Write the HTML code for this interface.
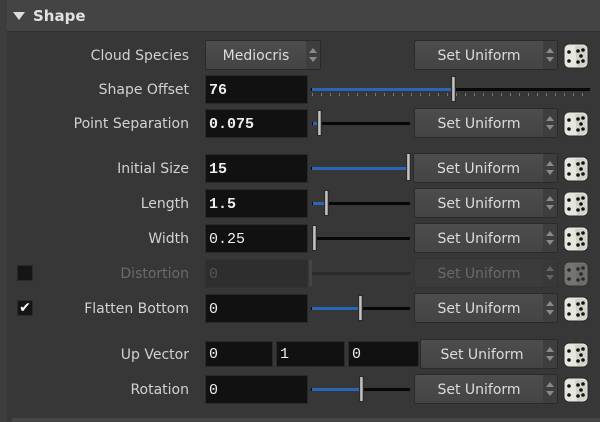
<!DOCTYPE html>
<html><head><meta charset="utf-8"><style>
*{margin:0;padding:0;box-sizing:border-box}
body{width:600px;height:422px;overflow:hidden;background:#373737;position:relative;font-family:"DejaVu Sans","Liberation Sans",sans-serif;color:#d6d6d6}
.a{position:absolute}
.strip{left:0;top:0;width:7px;height:422px;background:#3d3d3d}
.hdr{left:7px;top:0;width:593px;height:32px;background:#444;border-bottom:1px solid #303030}
.hdr .t{left:8px;top:7px;font-weight:bold;font-size:15px;color:#e2e2e2}
.lbl{right:411px;font-size:14px;color:#d2d2d2;text-align:right;white-space:nowrap;margin-top:2px}
.fld{background:#111;border:1px solid #2a2a2a;height:29px;font-family:"Liberation Mono","DejaVu Sans Mono",monospace;font-size:15px;color:#eee;padding:6px 0 0 3px}
.b{font-weight:bold}
.btn{height:30px;border:1px solid #2a2a2a;border-radius:2px;background:linear-gradient(#4d4d4d,#444);font-size:14px;color:#dcdcdc}
.btn .tx{left:0;right:14px;top:7px;text-align:center}
.btn .ar{right:0;top:0;bottom:0;width:14px;background:#3e3e3e}
.ar:before{content:"";position:absolute;left:3px;top:7px;border:4px solid transparent;border-bottom:5px solid #8a8a8a;border-top:0}
.ar:after{content:"";position:absolute;left:3px;top:16px;border:4px solid transparent;border-top:5px solid #8a8a8a;border-bottom:0}
.trk{height:3px;background:#080808}
.blu{height:3px;background:#2a66b8}
.hnd{width:5px;height:26px;background:linear-gradient(90deg,#999,#cfcfcf,#777);border:1px solid #2a2a2a}
.dim{opacity:.35}
</style></head><body>
<div class="a strip"></div>
<div class="a hdr"><div class="a" style="left:6px;top:12px;border:6px solid transparent;border-top:8px solid #ddd;border-bottom:0"></div><div class="a t" style="left:26px">Shape</div></div>
<div class="a" style="left:12px;top:418px;width:588px;height:4px;background:#464646"></div>

<svg width="0" height="0" style="position:absolute"><defs>
<g id="d"><rect x="2" y="3" width="24" height="24" rx="5" fill="#e6e6de" stroke="#2a2a2a" stroke-width="1"/><path d="M13 5 Q22 4 24 6 L25 22 Q24 26 15 26 Z" fill="#d2d2c8"/>
<circle cx="7" cy="11" r="1.8" fill="#111"/><circle cx="7" cy="20" r="1.8" fill="#111"/><circle cx="16" cy="10" r="1.8" fill="#111"/><circle cx="21" cy="9" r="1.8" fill="#111"/><circle cx="19" cy="15" r="1.8" fill="#111"/><circle cx="16" cy="21" r="1.8" fill="#111"/><circle cx="21" cy="20" r="1.8" fill="#111"/></g></defs></svg>

<div class="a lbl" style="top:46px">Cloud Species</div>
<div class="a btn" style="left:205px;top:40px;width:116px"><div class="a tx">Mediocris</div><div class="a ar"></div></div>
<div class="a btn" style="left:414px;top:40px;width:144px"><div class="a tx">Set Uniform</div><div class="a ar"></div></div>
<svg class="a" style="left:562px;top:41px" width="28" height="29"><use href="#d"/></svg>

<div class="a lbl" style="top:80px">Shape Offset</div>
<div class="a fld b" style="left:205px;top:75px;width:103px">76</div>
<div class="a trk" style="left:311px;top:88px;width:279px"></div>
<div class="a blu" style="left:312px;top:88px;width:141px"></div>
<div class="a" style="left:312px;top:93px;width:278px;height:3px;background:repeating-linear-gradient(90deg,#777 0 1px,transparent 1px 9px)"></div>
<div class="a hnd" style="left:451px;top:76px"></div>

<div class="a lbl" style="top:114px">Point Separation</div>
<div class="a fld b" style="left:205px;top:109px;width:103px">0.075</div>
<div class="a trk" style="left:312px;top:122px;width:98px"></div>
<div class="a blu" style="left:313px;top:122px;width:6px"></div>
<div class="a hnd" style="left:317px;top:110px"></div>
<div class="a btn" style="left:414px;top:108px;width:144px"><div class="a tx">Set Uniform</div><div class="a ar"></div></div>
<svg class="a" style="left:562px;top:109px" width="28" height="29"><use href="#d"/></svg>

<div class="a lbl" style="top:159px">Initial Size</div>
<div class="a fld b" style="left:205px;top:154px;width:103px">15</div>
<div class="a trk" style="left:311px;top:167px;width:99px"></div>
<div class="a blu" style="left:312px;top:167px;width:96px"></div>
<div class="a hnd" style="left:406px;top:153px;height:28px"></div>
<div class="a btn" style="left:413px;top:153px;width:145px"><div class="a tx">Set Uniform</div><div class="a ar"></div></div>
<svg class="a" style="left:562px;top:154px" width="28" height="29"><use href="#d"/></svg>

<div class="a lbl" style="top:194px">Length</div>
<div class="a fld b" style="left:205px;top:189px;width:103px">1.5</div>
<div class="a trk" style="left:312px;top:202px;width:98px"></div>
<div class="a blu" style="left:313px;top:202px;width:12px"></div>
<div class="a hnd" style="left:324px;top:190px"></div>
<div class="a btn" style="left:414px;top:188px;width:144px"><div class="a tx">Set Uniform</div><div class="a ar"></div></div>
<svg class="a" style="left:562px;top:189px" width="28" height="29"><use href="#d"/></svg>

<div class="a lbl" style="top:229px">Width</div>
<div class="a fld" style="left:205px;top:224px;width:103px">0.25</div>
<div class="a trk" style="left:312px;top:237px;width:98px"></div>
<div class="a hnd" style="left:312px;top:225px"></div>
<div class="a btn" style="left:414px;top:223px;width:144px"><div class="a tx">Set Uniform</div><div class="a ar"></div></div>
<svg class="a" style="left:562px;top:224px" width="28" height="29"><use href="#d"/></svg>

<div class="a" style="left:17px;top:265px;width:16px;height:16px;background:#151515;border:1px solid #2a2a2a"></div>
<div class="a lbl" style="top:264px;color:#6a6a6a">Distortion</div>
<div class="a fld" style="left:205px;top:259px;width:103px;background:#2e2e2e;border-color:#333;color:#555">0</div>
<div class="a" style="left:310px;top:272px;width:100px;height:3px;background:#2a2a2a"></div>
<div class="a" style="left:309px;top:260px;width:3px;height:26px;background:#444"></div>
<div class="a btn" style="left:414px;top:258px;width:144px;background:#3b3b3b;border-color:#333;color:#6a6a6a"><div class="a tx">Set Uniform</div><div class="a ar" style="background:#373737;opacity:.5"></div></div>
<svg class="a dim" style="left:562px;top:259px" width="28" height="29"><use href="#d"/></svg>

<div class="a" style="left:17px;top:300px;width:16px;height:16px;background:#151515;border:1px solid #2a2a2a;color:#fff;font-size:14px;line-height:14px;text-align:center">✔</div>
<div class="a lbl" style="top:299px">Flatten Bottom</div>
<div class="a fld" style="left:205px;top:294px;width:103px">0</div>
<div class="a trk" style="left:311px;top:307px;width:99px"></div>
<div class="a blu" style="left:312px;top:307px;width:47px"></div>
<div class="a hnd" style="left:358px;top:295px"></div>
<div class="a btn" style="left:414px;top:293px;width:144px"><div class="a tx">Set Uniform</div><div class="a ar"></div></div>
<svg class="a" style="left:562px;top:294px" width="28" height="29"><use href="#d"/></svg>

<div class="a lbl" style="top:345px">Up Vector</div>
<div class="a fld" style="left:205px;top:341px;width:68px;height:26px;padding-top:4px">0</div>
<div class="a fld" style="left:276px;top:341px;width:69px;height:26px;padding-top:4px">1</div>
<div class="a fld" style="left:348px;top:341px;width:71px;height:26px;padding-top:4px">0</div>
<div class="a btn" style="left:420px;top:339px;width:138px"><div class="a tx">Set Uniform</div><div class="a ar"></div></div>
<svg class="a" style="left:562px;top:340px" width="28" height="29"><use href="#d"/></svg>

<div class="a lbl" style="top:380px">Rotation</div>
<div class="a fld" style="left:205px;top:375px;width:103px">0</div>
<div class="a trk" style="left:311px;top:388px;width:99px"></div>
<div class="a blu" style="left:312px;top:388px;width:48px"></div>
<div class="a hnd" style="left:359px;top:376px"></div>
<div class="a btn" style="left:414px;top:374px;width:144px"><div class="a tx">Set Uniform</div><div class="a ar"></div></div>
<svg class="a" style="left:562px;top:375px" width="28" height="29"><use href="#d"/></svg>
</body></html>
